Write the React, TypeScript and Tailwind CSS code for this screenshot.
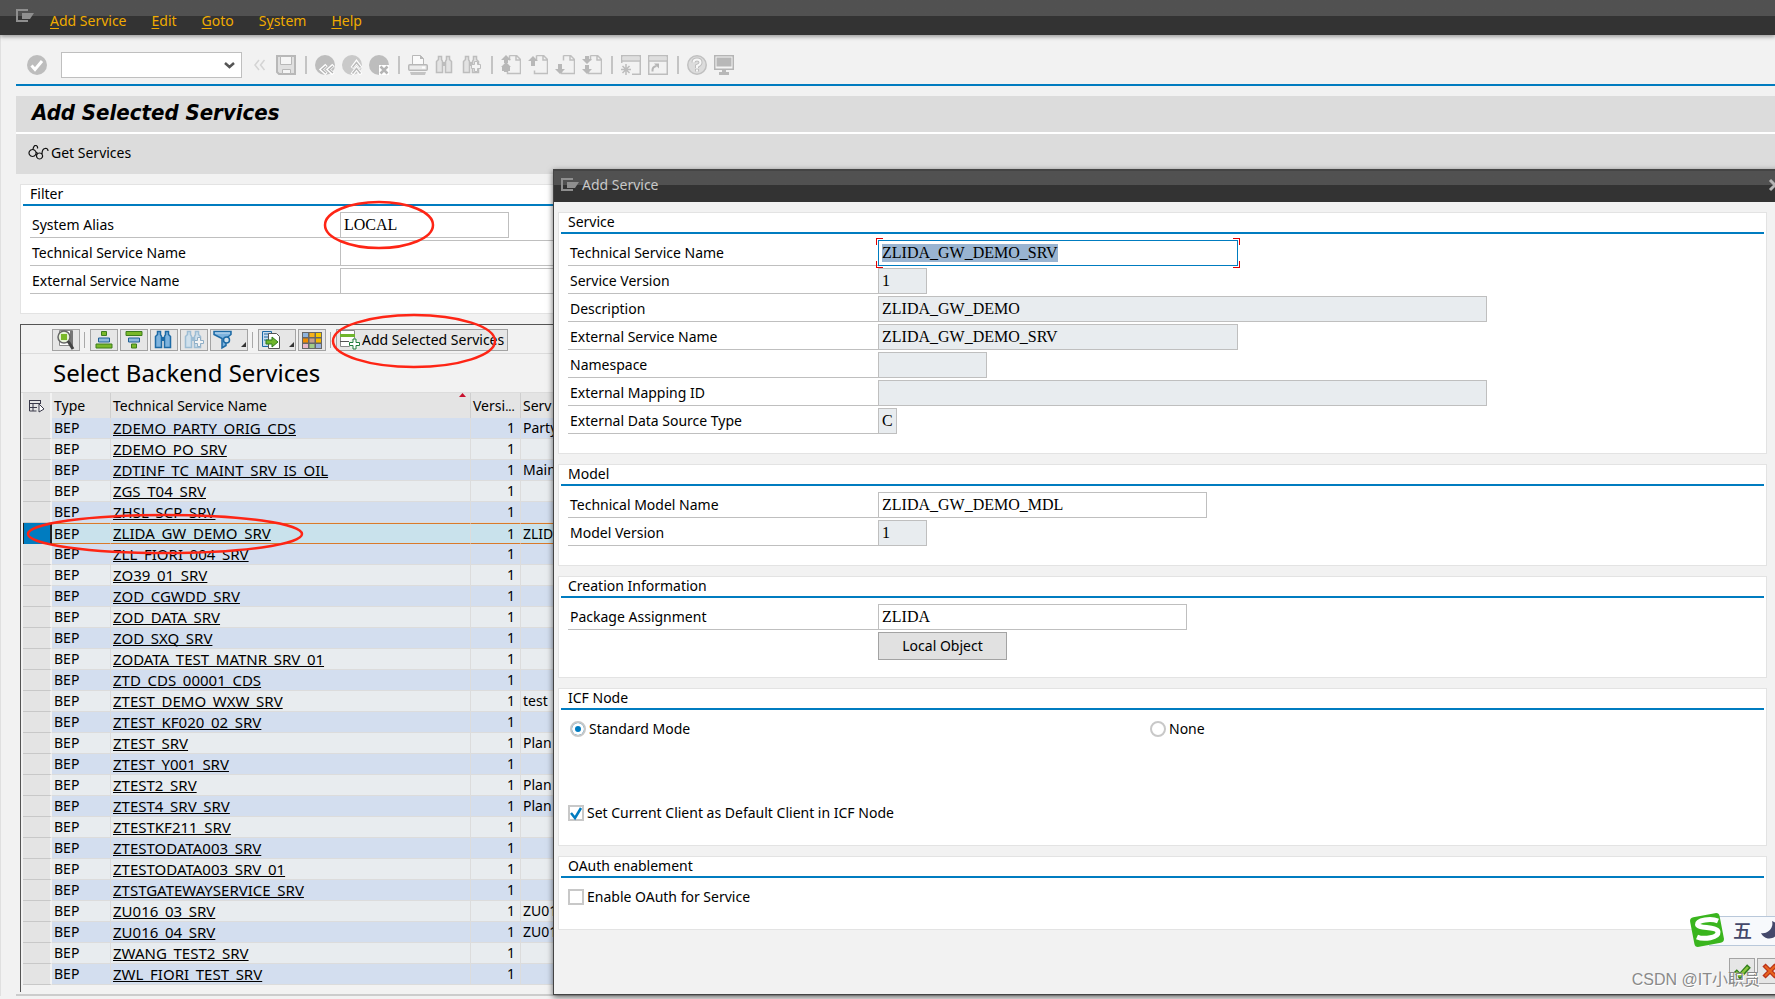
import { useId, useState } from "react";
import type { ReactNode } from "react";

const menus = [["", "A", "dd Service"], ["", "E", "dit"], ["", "G", "oto"], ["S", "y", "stem"], ["", "H", "elp"]];

const services: [string, string?][] = [
  ["ZDEMO_PARTY_ORIG_CDS", "Party"],
  ["ZDEMO_PO_SRV"],
  ["ZDTINF_TC_MAINT_SRV_IS_OIL", "Main"],
  ["ZGS_T04_SRV"],
  ["ZHSL_SCP_SRV"],
  ["ZLIDA_GW_DEMO_SRV", "ZLID"],
  ["ZLL_FIORI_004_SRV"],
  ["ZO39_01_SRV"],
  ["ZOD_CGWDD_SRV"],
  ["ZOD_DATA_SRV"],
  ["ZOD_SXQ_SRV"],
  ["ZODATA_TEST_MATNR_SRV_01"],
  ["ZTD_CDS_00001_CDS"],
  ["ZTEST_DEMO_WXW_SRV", "test"],
  ["ZTEST_KF020_02_SRV"],
  ["ZTEST_SRV", "Plan"],
  ["ZTEST_Y001_SRV"],
  ["ZTEST2_SRV", "Plan"],
  ["ZTEST4_SRV_SRV", "Plan"],
  ["ZTESTKF211_SRV"],
  ["ZTESTODATA003_SRV"],
  ["ZTESTODATA003_SRV_01"],
  ["ZTSTGATEWAYSERVICE_SRV"],
  ["ZU016_03_SRV", "ZU01"],
  ["ZU016_04_SRV", "ZU01"],
  ["ZWANG_TEST2_SRV"],
  ["ZWL_FIORI_TEST_SRV"],
];

/* ---------- icons ---------- */

function Svg({ children, w = 20, h = 20 }: { children: ReactNode; w?: number; h?: number }) {
  return (
    <svg width={w} height={h} viewBox={`0 0 ${w} ${h}`} fill="none" className="block shrink-0">
      {children}
    </svg>
  );
}

const WindowIcon = () => (
  <Svg w={19} h={14}>
    <path d="M12 1H1v11h11" stroke="#8f8f8f" strokeWidth="2" />
    <path d="M6 4h12l-4 6H6z" fill="#8f8f8f" />
  </Svg>
);

const Page = () => <path d="M9 1h7l4 4v14H7v-3M9 1v5M15.500 1v4.500H20" transform="translate(-.5 -.5)" stroke="#bfbfbf" strokeWidth="1.500" fill="#f2f2f2" />;

const Binoculars = ({ line, fill }: { line: string; fill: string }) => (
  <>
    <path d="M4.500 1.500h3v3l1 2v11h-6v-11l2-2zM12.500 1.500h3v3l2 2v11h-6v-11l1-2z" transform="translate(-1 0)" fill={fill} stroke={line} strokeWidth="1.500" />
    <path d="M7.500 7h3v4h-3z" fill={line} />
  </>
);

const std = {
  check: (
    <Svg>
      <circle cx="10" cy="10" r="10" fill="#bdbdbd" />
      <path d="M4.500 10.500l3.500 4 7-8.500" stroke="#fff" strokeWidth="3" />
    </Svg>
  ),
  prev: (
    <Svg>
      <path d="M10 5l-4 5 4 5M15.500 5l-4 5 4 5" stroke="#d4d4d4" strokeWidth="1.500" />
    </Svg>
  ),
  save: (
    <Svg>
      <path d="M1 1h18v18H3l-2-2z" stroke="#b8b8b8" strokeWidth="2" fill="#e0e0e0" />
      <path d="M4.500 1.500h11v8h-11zM6.500 14.500h8v4h-8z" stroke="#b8b8b8" fill="#f5f5f5" />
    </Svg>
  ),
  back: (
    <Svg>
      <circle cx="10" cy="10" r="10" fill="#bdbdbd" />
      <path d="M11.500 10l-5 4.500 5 4.500M18.500 10l-5 4.500 5 4.500" stroke="#fff" strokeWidth="3.500" />
      <path d="M11 11l-4 3.500 4 3.500M18 11l-4 3.500 4 3.500" stroke="#b5b5b5" strokeWidth="1.500" />
    </Svg>
  ),
  exit: (
    <Svg>
      <circle cx="10" cy="10" r="10" fill="#c9c9c9" />
      <path d="M10 13l4.500-6 4.500 6M10 19.500l4.500-6 4.500 6" stroke="#fff" strokeWidth="3.500" />
      <path d="M10.500 12.500l4-5 4 5M10.500 18.500l4-5 4 5" stroke="#bbb" strokeWidth="1.500" />
    </Svg>
  ),
  cancel: (
    <Svg>
      <circle cx="10" cy="10" r="10" fill="#bdbdbd" />
      <path d="M10 10h10v10H10z" fill="#fff" />
      <path d="M11.500 11.500l7 7M18.500 11.500l-7 7" stroke="#b5b5b5" strokeWidth="2.500" />
    </Svg>
  ),
  print: (
    <Svg>
      <path d="M4.500 9V.5h8l3 3V9" stroke="#b8b8b8" fill="#fafafa" />
      <path d="M12 0v4h4z" fill="#b8b8b8" />
      <rect x=".75" y="9.750" width="18.500" height="5.500" rx="1" stroke="#b8b8b8" strokeWidth="1.500" fill="#ececec" />
      <path d="M14 11.500h3v2h-3z" fill="#fff" />
      <path d="M2 17h16l-1 3H3z" fill="#c4c4c4" />
    </Svg>
  ),
  find: (
    <Svg>
      <Binoculars line="#bdbdbd" fill="#e3e3e3" />
    </Svg>
  ),
  findNext: (
    <Svg>
      <Binoculars line="#bdbdbd" fill="#e3e3e3" />
      <path d="M12.500 6.500h3v3h3v4h-3v3h-3v-3h-3v-4h3z" fill="#f4f4f4" stroke="#bdbdbd" />
    </Svg>
  ),
  first: (
    <Svg>
      <Page />
      <path d="M5 0l5 5H7v3H3V5H0zM5 7l5 5H7v5H3v-5H0zM1 12h8v4H1z" fill="#b8b8b8" />
    </Svg>
  ),
  pageUp: (
    <Svg>
      <Page />
      <path d="M5 1l5 5H7v5H3V6H0z" fill="#b8b8b8" />
    </Svg>
  ),
  pageDown: (
    <Svg>
      <Page />
      <path d="M3 9h4v5h3l-5 5-5-5h3z" fill="#b8b8b8" />
    </Svg>
  ),
  last: (
    <Svg>
      <Page />
      <path d="M3 1h4v3h3L5 9 0 4h3zM3 10h4v4h3l-5 5-5-5h3z" fill="#b8b8b8" />
    </Svg>
  ),
  session: (
    <Svg>
      <path d="M.75 8V.75h18.500v18.500H11M1 6h18" stroke="#bdbdbd" strokeWidth="1.500" />
      <path d="M2 2h16v3H2z" fill="#dedede" />
      <path d="M5 9v11M0 14.500h10M1.500 11l7 7M8.500 11l-7 7" stroke="#bdbdbd" strokeWidth="1.500" />
    </Svg>
  ),
  shortcut: (
    <Svg>
      <path d="M.75.750h18.500v18.500H.75zM1 6h18" stroke="#bdbdbd" strokeWidth="1.500" />
      <path d="M2 2h16v3H2z" fill="#dedede" />
      <path d="M4.500 16.500q-.5-5 4-5.500" stroke="#b5b5b5" strokeWidth="2" />
      <path d="M6 8.500h5v5z" fill="#b5b5b5" />
    </Svg>
  ),
  help: (
    <Svg>
      <circle cx="10" cy="10" r="9.250" stroke="#c0c0c0" strokeWidth="1.500" fill="#dcdcdc" />
      <path d="M6.500 7.500q0-3 3.500-3t3.500 3q0 2-3.500 3.500v2M10 14v2.500" stroke="#bdbdbd" strokeWidth="4" />
      <path d="M6.500 7.500q0-3 3.500-3t3.500 3q0 2-3.500 3.500v2M10 14.500v2" stroke="#f7f7f7" strokeWidth="2" />
    </Svg>
  ),
  layout: (
    <Svg>
      <rect x=".75" y=".75" width="18.500" height="13.500" stroke="#b5b5b5" strokeWidth="1.500" fill="#f4f4f4" />
      <path d="M2.500 2.500h15v9h-15z" fill="#b8b8b8" />
      <path d="M8 15h4v2h3v3H5v-3h3z" fill="#b8b8b8" />
    </Svg>
  ),
};

const stdBar: [string, keyof typeof std][][] = [
  [["Back", "back"], ["Exit", "exit"], ["Cancel", "cancel"]],
  [["Print", "print"], ["Find", "find"], ["Find Next", "findNext"]],
  [["First Page", "first"], ["Previous Page", "pageUp"], ["Next Page", "pageDown"], ["Last Page", "last"]],
  [["New Session", "session"], ["Create Shortcut", "shortcut"]],
  [["Help", "help"], ["Customize Layout", "layout"]],
];

const Glasses = () => (
  <Svg w={21} h={16}>
    <path d="M4.500 4.500a3.500 3.500 0 1 0 .1 0zM11.500 8a3 3 0 1 0 .1 0zM5 4q1-4 3-3.500T9.500 3.500M14 9q0-5 3-5.500t3 2.500M7.500 7l2 1" stroke="#111" strokeWidth="1.200" />
  </Svg>
);

const Details = () => (
  <Svg>
    <path d="M3.500 .5h13v15h-13z" fill="#fff" stroke="#888" />
    <path d="M14 1h3v15h-3z" fill="#777" />
    <circle cx="8" cy="7" r="6" fill="#e6f2d6" stroke="#666" strokeWidth="1.500" />
    <path d="M5 4h6v6H5z" fill="#7ab829" />
    <path d="M12 11l5 8" stroke="#444" strokeWidth="3" />
  </Svg>
);
const SortAsc = () => (
  <Svg>
    <path d="M7.500 1.500h5v4h-5z" fill="#7ab829" stroke="#3c7d1c" />
    <path d="M4.500 8h11v4h-11z" fill="#8fb9dc" stroke="#1f5f94" />
    <path d="M2 14h16v4H2z" fill="#7ab829" stroke="#3c7d1c" />
  </Svg>
);
const SortDesc = () => (
  <Svg>
    <path d="M2 1.500h16v4H2z" fill="#7ab829" stroke="#3c7d1c" />
    <path d="M4.500 8h11v4h-11z" fill="#8fb9dc" stroke="#1f5f94" />
    <path d="M7.500 14h5v4h-5z" fill="#7ab829" stroke="#3c7d1c" />
  </Svg>
);
const BlueFind = () => (
  <Svg>
    <Binoculars line="#1d6aa5" fill="#7db3de" />
  </Svg>
);
const BlueFindNext = () => (
  <Svg>
    <Binoculars line="#9dbdd4" fill="#cfe0ec" />
    <path d="M13.500 7.500h3v3h3v3h-3v3h-3v-3h-3v-3h3z" fill="#f4f4f4" stroke="#8faec6" />
  </Svg>
);
const Funnel = () => (
  <Svg>
    <path d="M1 1.500h17v3l-5 4v7l-4 2.500v-9.500l-8-4z" fill="#7db3de" stroke="#1d6aa5" strokeWidth="1.500" />
    <path d="M2 3h15" stroke="#c9e0f2" />
    <circle cx="13.500" cy="10" r="3" fill="#cfe0ec" stroke="#1d6aa5" strokeWidth="1.500" />
  </Svg>
);
const Corner = () => (
  <svg width="5" height="5" viewBox="0 0 5 5" className="mt-2 block shrink-0">
    <path d="M5 0v5H0z" fill="#333" />
  </svg>
);
const ExportIcon = () => (
  <Svg>
    <path d="M1.500 1.500h9v15h-9z" fill="#c9dcee" stroke="#1d6aa5" />
    <path d="M3 4h5M3 7h5M3 10h5" stroke="#1d6aa5" />
    <path d="M7.500 3.500h8l3 3v12h-11z" fill="#fff" stroke="#555" />
    <path d="M5 10h6V7l6 5-6 5v-3H5z" fill="#6fb52c" stroke="#2f7d1c" />
  </Svg>
);
const tiles = ["#8fb4dc", "#f6b21a", "#f6c800", "#f08c00", "#c8a08c", "#f6b800", "#e8b8c8", "#a0cc88", "#98b0d8"];
const Grid = () => (
  <Svg>
    <path d="M0 2h20v17H0z" fill="#666" />
    {tiles.map((c, i) => (
      <rect key={i} x={1 + (i % 3) * 6.500} y={3 + Math.floor(i / 3) * 5.500} width="5" height="4" fill={c} />
    ))}
  </Svg>
);
const AddRow = () => (
  <Svg>
    <path d="M.5.500h14v16H.5z" fill="#fff" stroke="#888" />
    <path d="M0 4h15v3H0z" fill="#6fb52c" />
    <path d="M0 11.500h9" stroke="#555" />
    <circle cx="14.500" cy="14" r="5.500" fill="#e8f3e8" />
    <path d="M13 9h3v3.500h3.500v3H16V19h-3v-3.500H9.500v-3H13z" fill="#fff" stroke="#1f7a3c" />
  </Svg>
);

/* ---------- building blocks ---------- */

function Group({ title, children }: { title: string; children: ReactNode }) {
  return (
    <section className="border border-[#e3e3e3] bg-white pb-[17px]">
      <h2 className="h-[19px] pl-[9px] text-sm leading-[18px]">{title}</h2>
      <div className="mx-[2px] mb-[6px] h-[2px] bg-[#007cc0]" />
      <div className="pl-[9px]">{children}</div>
    </section>
  );
}

type FieldProps = { label: string; value?: string; width: string; readOnly?: boolean; focused?: boolean };

function Field({ label, value = "", width, readOnly, focused }: FieldProps) {
  const id = useId();
  const tone = readOnly ? "bg-[#e8ecef] border-[#bfbfbf]" : focused ? "bg-white border-[#007cc0]" : "bg-white border-[#bfbfbf]";
  return (
    <div className="mb-[2px] flex h-[26px]">
      <label htmlFor={id} className="w-[310px] shrink-0 border-b border-[#bfbfbf] pl-[2px] text-sm leading-[26px]">{label}</label>
      <div className={`relative ${width}`}>
        <input
          id={id}
          defaultValue={value}
          readOnly={readOnly}
          autoFocus={focused}
          onFocus={focused ? (e) => e.currentTarget.select() : undefined}
          className={`block h-[26px] w-full border px-[3px] font-['Liberation_Serif','Noto_Sans_CJK_SC',serif] text-base leading-5 text-black outline-none selection:bg-[#99b4d1] selection:text-black ${tone}`}
        />
        {focused && (
          <>
            <i className="absolute -top-[2px] -left-[2px] size-[7px] border-t border-l border-[#e00000]" />
            <i className="absolute -top-[2px] -right-[2px] size-[7px] border-t border-r border-[#e00000]" />
            <i className="absolute -bottom-[2px] -left-[2px] size-[7px] border-b border-l border-[#e00000]" />
            <i className="absolute -right-[2px] -bottom-[2px] size-[7px] border-r border-b border-[#e00000]" />
          </>
        )}
      </div>
    </div>
  );
}

function Check({ label, initial }: { label: string; initial: boolean }) {
  const [on, setOn] = useState(initial);
  return (
    <label className="flex h-[26px] mb-[2px] items-center text-sm">
      <span className="relative mr-[3px] block size-4">
        <input type="checkbox" checked={on} onChange={() => setOn(!on)} className="block size-4 appearance-none border-2 border-[#c8c8c8] bg-white" />
        {on && (
          <svg width="16" height="16" viewBox="0 0 16 16" fill="none" className="pointer-events-none absolute inset-0">
            <path d="M3 8l4 5 6-10" stroke="#007cc0" strokeWidth="2.500" />
          </svg>
        )}
      </span>
      {label}
    </label>
  );
}

function Mode({ label, checked, onPick }: { label: string; checked: boolean; onPick: () => void }) {
  return (
    <label className="flex w-[580px] shrink-0 items-center gap-[3px] text-sm">
      <input
        type="radio"
        name="icf"
        checked={checked}
        onChange={onPick}
        className="size-4 appearance-none rounded-full border-2 border-[#c8c8c8] bg-white checked:bg-[#007cc0] checked:shadow-[inset_0_0_0_3px_white]"
      />
      {label}
    </label>
  );
}

function GridButton({ label, children, wide }: { label: string; children: ReactNode; wide?: boolean }) {
  return (
    <button
      aria-label={label}
      className={`flex h-[22px] shrink-0 items-center justify-center border border-[#a3a3a3] bg-[#e6e6e6] ${wide ? "w-[38px] gap-2" : "w-7"}`}
    >
      {children}
    </button>
  );
}

const GridSep = () => <div className="mr-[3px] ml-[2px] h-4 w-px bg-[#a8a8a8]" />;

function ServiceTable() {
  const [picked, setPicked] = useState("ZLIDA_GW_DEMO_SRV");
  const th = "border-r border-[#cfcfcf] bg-[#e4e4e4] px-[2px] text-left font-normal";
  return (
    <table className="ml-[2px] w-full table-fixed border-separate border-spacing-0 text-sm">
      <colgroup>
        <col className="w-[29px]" />
        <col className="w-[59px]" />
        <col className="w-[360px]" />
        <col className="w-[50px]" />
        <col />
      </colgroup>
      <thead>
        <tr className="h-[25px]">
          <th className="border-r-2 border-[#f2f2f2] bg-[#e4e4e4] p-0">
            <button aria-label="Select all" className="mx-auto block">
              <Svg w={16} h={14}>
                <path d="M.5 1.500h11M.5 4.500h11M.5 1v11h7M4 5v7M1 8.500h7M11.500 1v4" stroke="#3a3a4a" />
                <path d="M10 5v8l5-3z" fill="#fff" stroke="#3a3a4a" />
              </Svg>
            </button>
          </th>
          <th className={th}>Type</th>
          <th className={`${th} relative`}>
            Technical Service Name
            <svg width="7" height="4" viewBox="0 0 7 4" className="absolute top-0 right-1"><path d="M3.500 0L7 4H0z" fill="#c8102e" /></svg>
          </th>
          <th className={`${th} whitespace-nowrap`}>Versi<span className="text-xs">...</span></th>
          <th className={th}>Serv</th>
        </tr>
      </thead>
      <tbody>
        {services.map(([name, text], i) => {
          const on = name === picked;
          const td = `px-[2px] py-0 border-r ${on ? "border-y border-y-[#d97a2b] border-r-[#dcdcdc] bg-[#c9e2ec] leading-[19px]" : i % 2 ? "border-b border-[#dcdcdc] bg-[#e8ecef] leading-5" : "border-b border-[#dcdcdc] bg-[#d3deef] leading-5"}`;
          return (
            <tr key={name} className="h-[21px]" onClick={() => setPicked(name)}>
              <td className={on ? "border-r-2 border-l border-[#222] bg-[#007cc0] p-0" : "border-r-2 border-b border-r-[#f2f2f2] border-b-[#c8c8c8] bg-[#e4e4e4] p-0"} />
              <td className={td}>BEP</td>
              <td className={`${td} text-[15px]`}><a href="#" className="underline decoration-1 underline-offset-1 [text-decoration-skip-ink:none]">{name}</a></td>
              <td className={`${td} pr-[5px] text-right`}>1</td>
              <td className={`${td} whitespace-nowrap`}>{text}</td>
            </tr>
          );
        })}
      </tbody>
    </table>
  );
}

function AddServiceDialog() {
  const [mode, setMode] = useState("std");
  return (
    <div role="dialog" aria-label="Add Service" className="absolute top-[169px] -right-5 left-[553px] border-x border-b border-[#444] bg-[#f2f2f2] shadow-[0_2px_6px_rgba(0,0,0,0.6)]">
      <header className="flex h-[33px] items-center border-t-2 border-[#444] bg-linear-to-b from-[#515151] from-45% to-[#333] to-45% pr-3 pb-1 pl-[7px]">
        <WindowIcon />
        <h1 className="ml-[2px] flex-1 text-sm text-[#c8c8c8]">Add Service</h1>
        <button aria-label="Close">
          <Svg w={14} h={14}>
            <path d="M2 2l10 10M12 2L2 12" stroke="#b5b5b5" strokeWidth="3" />
          </Svg>
        </button>
      </header>
      <div className="flex flex-col gap-[10px] pt-[10px] pr-[27px] pl-1">
        <Group title="Service">
          <Field label="Technical Service Name" value="ZLIDA_GW_DEMO_SRV" width="w-[360px]" focused />
          <Field label="Service Version" value="1" width="w-[49px]" readOnly />
          <Field label="Description" value="ZLIDA_GW_DEMO" width="w-[609px]" readOnly />
          <Field label="External Service Name" value="ZLIDA_GW_DEMO_SRV" width="w-[360px]" readOnly />
          <Field label="Namespace" width="w-[109px]" readOnly />
          <Field label="External Mapping ID" width="w-[609px]" readOnly />
          <Field label="External Data Source Type" value="C" width="w-[19px]" readOnly />
        </Group>
        <Group title="Model">
          <Field label="Technical Model Name" value="ZLIDA_GW_DEMO_MDL" width="w-[329px]" />
          <Field label="Model Version" value="1" width="w-[49px]" readOnly />
        </Group>
        <Group title="Creation Information">
          <Field label="Package Assignment" value="ZLIDA" width="w-[309px]" />
          <button className="ml-[310px] block h-7 w-[129px] border border-[#a3a3a3] bg-[#e1e1e1] pb-px text-sm">Local Object</button>
        </Group>
        <Group title="ICF Node">
          <div className="mb-[58px] flex h-[26px] items-center pl-[2px]">
            <Mode label="Standard Mode" checked={mode === "std"} onPick={() => setMode("std")} />
            <Mode label="None" checked={mode === "none"} onPick={() => setMode("none")} />
          </div>
          <Check label="Set Current Client as Default Client in ICF Node" initial />
        </Group>
        <Group title="OAuth enablement">
          <Check label="Enable OAuth for Service" initial={false} />
        </Group>
      </div>
      <footer className="flex justify-end gap-[2px] pt-[28px] pr-[11px] pb-[10px]">
        <button aria-label="Continue" className="flex size-[26px] items-center justify-center border border-[#a3a3a3] bg-[#e6e6e6]">
          <Svg w={18} h={16}>
            <path d="M2 8l5 5L16 3" stroke="#2f7d1c" strokeWidth="5" />
            <path d="M3 9l4 3.500L15 4" stroke="#8cc63f" strokeWidth="2.500" />
          </Svg>
        </button>
        <button aria-label="Cancel" className="flex size-[26px] items-center justify-center border border-[#a3a3a3] bg-[#e6e6e6]">
          <Svg w={16} h={16}>
            <path d="M2 2l12 12M14 2L2 14" stroke="#b8321a" strokeWidth="4.500" />
            <path d="M3 3l10 10M13 3L3 13" stroke="#e8641e" strokeWidth="2" />
          </Svg>
        </button>
      </footer>
    </div>
  );
}

function ImeBar() {
  return (
    <div className="absolute top-[912px] right-0 flex h-[35px] w-[86px] items-center">
      <div className="absolute top-1 right-0 left-5 h-[30px] border-y border-[#b9c8da] bg-[#f7f9fc]" />
      <svg width="36" height="35" viewBox="0 0 36 35" className="relative shrink-0">
        <rect x="3" y="3" width="30" height="30" rx="4" transform="rotate(-11 18 18)" fill="#3ab51e" />
        <path d="M29 9C22 6 8 8 8.500 12.500c.5 4.500 20 1.500 20.500 7.500.5 5.500-14 8-21 5" stroke="#fff" strokeWidth="5" fill="none" />
      </svg>
      <span className="relative ml-2 shrink-0 font-['Noto_Sans_CJK_SC',sans-serif] text-[19px] leading-8 font-medium text-[#44486a]">五</span>
      <svg width="20" height="20" viewBox="0 0 20 20" className="relative ml-[8px] shrink-0">
        <path d="M12 1a9 9 0 1 1-11 12a9.500 9.500 0 0 0 11-12z" fill="#44486a" />
      </svg>
    </div>
  );
}

export default function App() {
  return (
    <div className="relative min-h-screen overflow-hidden bg-[#f2f2f2] font-['Noto_Sans','Noto_Sans_CJK_SC',sans-serif] text-sm text-black">
      <nav className="relative flex h-[35px] gap-[25px] bg-linear-to-b from-[#515151] from-45% to-[#333] to-45% pl-4 text-sm text-[#f0ab00] shadow-[0_2px_4px_rgba(0,0,0,0.35)]">
        <span className="-mr-[10px] pt-[9px]"><WindowIcon /></span>
        {menus.map(([pre, key, rest]) => (
          <button key={rest} className="pt-[7px]">{pre}<u className="underline-offset-2">{key}</u>{rest}</button>
        ))}
      </nav>

      <div className="border-l border-[#e0e0e0] pl-[15px]">
        <div className="flex h-[51px] items-center gap-[7px] border-b-2 border-[#007cc0] pt-[11px] pl-[11px]">
          <button aria-label="Enter">{std.check}</button>
          <div className="relative ml-[7px]">
            <select aria-label="Command" className="block h-[26px] w-[181px] appearance-none border border-[#bfbfbf] bg-white">
              <option></option>
            </select>
            <svg width="11" height="7" viewBox="0 0 11 7" className="pointer-events-none absolute top-[10px] right-[7px]">
              <path d="M1 1l4.500 4L10 1" stroke="#555" strokeWidth="2.500" fill="none" />
            </svg>
          </div>
          <button aria-label="Collapse">{std.prev}</button>
          <button aria-label="Save">{std.save}</button>
          {stdBar.map((group, i) => (
            <div key={i} className="flex items-center gap-[7px]">
              <div className="mr-px ml-[2px] h-[18px] w-[2px] bg-[#c4c4c4]" />
              {group.map(([label, icon]) => (
                <button key={label} aria-label={label}>{std[icon]}</button>
              ))}
            </div>
          ))}
        </div>

        <main className="pt-[10px]">
          <h1 className="h-9 bg-[#dcdcdc] pl-4 font-['DejaVu_Sans_Condensed','DejaVu_Sans',sans-serif] text-[22px] leading-[34px] font-bold italic">Add Selected Services</h1>
          <div className="mb-[10px] border-t-2 border-white bg-[#dcdcdc]">
            <button className="flex h-10 items-center gap-[2px] pb-[3px] pl-3 text-sm"><Glasses />Get Services</button>
          </div>
          <div className="ml-1">
            <Group title="Filter">
              <Field label="System Alias" value="LOCAL" width="w-[169px]" />
              <Field label="Technical Service Name" width="flex-1" />
              <Field label="External Service Name" width="flex-1" />
            </Group>
          </div>

          <section className="mt-[10px] ml-1 border-t border-l border-[#555] pb-[7px]">
            <div className="flex h-[29px] items-center gap-[2px] border-b border-[#dcdcdc] pt-[2px] pl-[31px]">
              <GridButton label="Details"><Details /></GridButton>
              <GridSep />
              <GridButton label="Sort ascending"><SortAsc /></GridButton>
              <GridButton label="Sort descending"><SortDesc /></GridButton>
              <GridButton label="Find"><BlueFind /></GridButton>
              <GridButton label="Find next"><BlueFindNext /></GridButton>
              <GridButton label="Filter" wide><Funnel /><Corner /></GridButton>
              <GridSep />
              <GridButton label="Export" wide><ExportIcon /><Corner /></GridButton>
              <GridButton label="Layout"><Grid /></GridButton>
              <GridSep />
              <button className="flex h-[22px] items-center gap-[2px] border border-[#a3a3a3] bg-[#e6e6e6] px-[3px] text-sm whitespace-nowrap"><AddRow />Add Selected Services</button>
            </div>
            <h2 className="h-[39px] border-b border-[#dcdcdc] pl-8 text-2xl leading-[38px]">Select Backend Services</h2>
            <ServiceTable />
          </section>
          <div className="mt-[2px] h-[2px] bg-[#cccccc]" />
        </main>
      </div>

      <AddServiceDialog />
      <ImeBar />

      <p className="absolute right-[15px] bottom-[7px] font-['Liberation_Sans','Noto_Sans_CJK_SC',sans-serif] text-base leading-6 text-[#8a8a8a] [text-shadow:1px_1px_0_white]">CSDN @IT小职员</p>

      {/* red markers over the rows and fields to use */}
      <svg width="560" height="600" viewBox="0 0 560 600" fill="none" stroke="#fe2515" strokeWidth="2.500" className="pointer-events-none absolute top-0 left-0">
        <ellipse cx="379" cy="225" rx="54" ry="23" />
        <ellipse cx="414" cy="341" rx="81" ry="26" />
        <ellipse cx="165" cy="534" rx="137" ry="19" />
      </svg>
    </div>
  );
}
